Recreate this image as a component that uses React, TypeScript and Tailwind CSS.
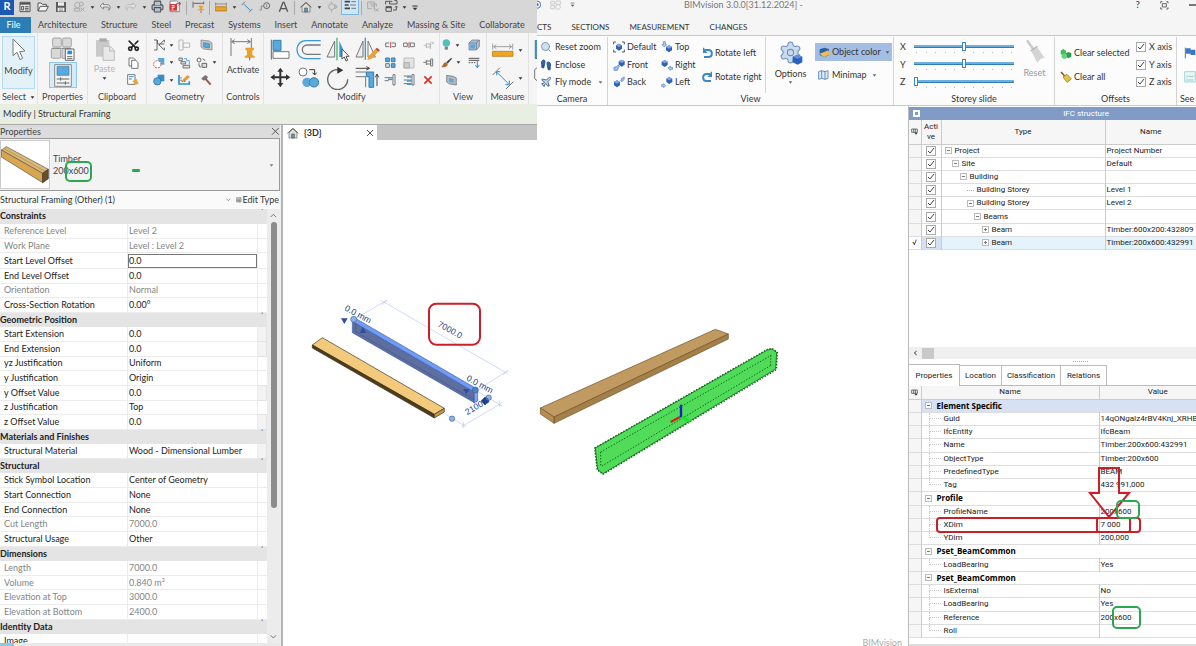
import type { ReactNode } from "react";
import clsx from "clsx";
import { Scissors, Search, Plane, Footprints, Printer, Settings } from "lucide-react";

interface ArtProps {
  w: number;
  h: number;
  children: ReactNode;
}

// Icons are drawn on a grid of 3 units per pixel
const Art = ({ w, h, children }: ArtProps) => (
  <svg
    className="shrink-0"
    width={w}
    height={h}
    viewBox={`0 0 ${w * 3} ${h * 3}`}
    fill="none"
    strokeWidth={3}
    aria-hidden="true"
  >
    {children}
  </svg>
);

const Caret = () => (
  <Art w={5} h={3}>
    <path d="M2 1h11l-5.500 7z" fill="#333" />
  </Art>
);

const BLUE = "#5aa9dd";
const GRAY = "#777";

/* ---------- Barra de acceso rápido ---------- */

type QuickKind = "icon" | "caret" | "sep" | "active";

const quickItems: { kind: QuickKind; label?: string; art?: ReactNode }[] = [
  {
    kind: "icon",
    label: "Ribbon panel",
    art: (
      <Art w={12} h={12}>
        <path d="M3 4h30v28H3z" stroke="#555" fill="#eee" />
        <path d="M3 8h30" stroke="#555" strokeWidth={6} />
        <path d="M8 16h6v11H8zM18 17h11M18 22h11M18 27h11" stroke="#555" />
      </Art>
    ),
  },
  {
    kind: "icon",
    label: "Open",
    art: (
      <Art w={12} h={12}>
        <path d="M3 30V6h9l4 4h12v7M3 30l7-14h24l-7 14z" stroke="#555" fill="#f4f4f4" />
      </Art>
    ),
  },
  {
    kind: "icon",
    label: "Save",
    art: (
      <Art w={12} h={12}>
        <path d="M3 3h30v30H3z" fill="#5c5c5c" />
        <path d="M9 4h18v10H9zM8 20h20v11H8z" fill="#eee" />
        <path d="M12 24h12M12 28h12" stroke="#777" strokeWidth={2} />
      </Art>
    ),
  },
  {
    kind: "icon",
    label: "Synchronize",
    art: (
      <Art w={13} h={12}>
        <circle cx="13" cy="12" r="8" stroke="#aaa" />
        <circle cx="25" cy="9" r="6" stroke="#aaa" />
        <path d="M4 30v-8h16v8zM22 20l12 10M34 20L22 32" stroke="#aaa" />
      </Art>
    ),
  },
  { kind: "caret" },
  {
    kind: "icon",
    label: "Undo",
    art: (
      <Art w={12} h={10}>
        <path d="M13 3L3 12l10 9v-6h12c5 0 7 4 4 10 7-6 6-17-5-17H13z" stroke="#555" fill="#eee" strokeWidth={2} />
      </Art>
    ),
  },
  { kind: "caret" },
  {
    kind: "icon",
    label: "Redo",
    art: (
      <Art w={12} h={10}>
        <path d="M23 3l10 9-10 9v-6H11c-5 0-7 4-4 10-7-6-6-17 5-17h11z" stroke="#aaa" fill="#e4e4e4" strokeWidth={2} />
      </Art>
    ),
  },
  { kind: "caret" },
  { kind: "icon", label: "Print", art: <Printer size={13} color="#4a5158" fill="#b8c4cc" /> },
  {
    kind: "icon",
    label: "Export PDF",
    art: (
      <Art w={12} h={13}>
        <path d="M3 3h20l8 8v24H3z" fill="#fff" stroke="#888" />
        <path d="M2 12h22v20H2z" fill="#d0383e" />
        <path d="M8 17h9M8 22h9M8 27h5" stroke="#fff" />
        <path d="M22 11h13M30 6l5 5-5 5" stroke="#d0383e" />
      </Art>
    ),
  },
  { kind: "sep" },
  {
    kind: "icon",
    label: "Dimension",
    art: (
      <Art w={13} h={12}>
        <path d="M3 2v18M35 2v8M5 7h28" stroke="#666" />
        <path d="M20 14h14v3l-3 2v6h5v3H18v-3h5v-6l-3-2z" fill="#e9a028" />
        <path d="M27 28v8" stroke="#b07416" />
      </Art>
    ),
  },
  { kind: "sep" },
  {
    kind: "icon",
    label: "Measure",
    art: (
      <Art w={12} h={10}>
        <path d="M2 2v9M34 2v9M2 6h32" stroke="#666" strokeWidth={2} />
        <path d="M1 14h34v13H1z" fill="#eaa22a" stroke="#a66f10" strokeWidth={2} />
      </Art>
    ),
  },
  { kind: "caret" },
  {
    kind: "icon",
    label: "Aligned dimension",
    art: (
      <Art w={12} h={12}>
        <path d="M2 12L12 2M24 34l10-10" stroke="#777" />
        <path d="M8 9l20 19" stroke="#2f8fd8" />
      </Art>
    ),
  },
  {
    kind: "icon",
    label: "Tag",
    art: (
      <Art w={12} h={10}>
        <circle cx="23" cy="11" r="9" stroke="#666" />
        <path d="M23 6v10M14 12H7v12H2" stroke="#666" strokeWidth={2} />
      </Art>
    ),
  },
  {
    kind: "icon",
    label: "Text",
    art: (
      <Art w={11} h={12}>
        <path d="M4 32L15 4h3l11 28M8 23h17" stroke="#555" strokeWidth={4} />
      </Art>
    ),
  },
  { kind: "sep" },
  { kind: "icon", label: "Default 3D view", art: <HomeArt /> },
  { kind: "caret" },
  {
    kind: "icon",
    label: "Section",
    art: (
      <Art w={11} h={12}>
        <circle cx="14" cy="17" r="9" stroke="#aaa" />
        <path d="M14 2v6M14 27v7M24 11l7 6-7 6z" stroke="#aaa" />
      </Art>
    ),
  },
  {
    kind: "active",
    label: "Thin lines",
    art: (
      <Art w={13} h={12}>
        <path d="M2 5h16M2 15h12M2 25h16" stroke="#444" strokeWidth={5} />
        <path d="M22 5h14M18 15h18M22 25h14" stroke="#444" strokeWidth={2} />
      </Art>
    ),
  },
  { kind: "sep" },
  {
    kind: "icon",
    label: "Close inactive",
    art: (
      <Art w={12} h={12}>
        <path d="M2 3h20v16M2 3v20h12M8 9h20v8M12 15h10v14M24 22l10 10M34 22L24 32" stroke="#aaa" />
      </Art>
    ),
  },
  {
    kind: "icon",
    label: "Switch windows",
    art: (
      <Art w={13} h={13}>
        <path d="M2 13V4h20M28 2h8v10H14v-6M3 20h16v14H3z" stroke="#555" />
        <path d="M3 22h16" stroke="#555" strokeWidth={5} />
        <path d="M24 30h10V19M30 22l4-4 4 4" stroke="#555" />
      </Art>
    ),
  },
  { kind: "caret" },
];

function HomeArt() {
  return (
    <Art w={12} h={12}>
      <path d="M6 17v16h24V17L18 6z" fill="#e5ddcf" stroke="#666" strokeWidth={2} />
      <path d="M1 19L18 4l16 15" stroke="#666" />
      <path d="M14 33V21h8v12z" fill="#4aa0d8" stroke="#555" strokeWidth={2} />
    </Art>
  );
}

const QuickAccess = () => (
  <div className="flex h-[15px] items-center overflow-hidden">
    <div className="flex h-[15px] w-4 shrink-0 items-center justify-start">
      <span className="flex h-[15px] w-[14px] items-start justify-center bg-[#1b57b5] text-[11px] leading-[11px] font-bold text-white">
        R
      </span>
    </div>
    {quickItems.map((item, i) => {
      if (item.kind === "caret")
        return (
          <span key={i} className="flex w-2 shrink-0 justify-center">
            <Caret />
          </span>
        );
      if (item.kind === "sep")
        return (
          <span key={i} className="flex w-[5px] shrink-0 justify-center">
            <span className="h-[14px] w-px bg-[#aaa]" />
          </span>
        );
      return (
        <button
          key={i}
          aria-label={item.label}
          className={clsx(
            "flex h-[15px] w-[18px] shrink-0 items-center justify-center pb-[2px]",
            item.kind === "active" && "border border-t-0 border-[#7cb8e0] bg-[#cfe6f5]",
          )}
        >
          {item.art}
        </button>
      );
    })}
    <span className="ml-1">
      <Art w={6} h={6}>
        <path d="M1 3h16" stroke="#333" />
        <path d="M2 8h14l-7 8z" fill="#333" />
      </Art>
    </span>
  </div>
);

/* ---------- Ribbon izquierdo ---------- */

const leftTabs = [
  "Architecture",
  "Structure",
  "Steel",
  "Precast",
  "Systems",
  "Insert",
  "Annotate",
  "Analyze",
  "Massing & Site",
  "Collaborate",
];

interface SectionProps {
  title: ReactNode;
  className: string;
  children: ReactNode;
}

const Section = ({ title, className, children }: SectionProps) => (
  <section
    className={clsx("flex shrink-0 flex-col border-r border-[#e2e2e2]", className)}
  >
    <div className="flex h-[57px] items-stretch justify-center">{children}</div>
    <div className="flex h-[14px] items-center justify-center gap-1 whitespace-nowrap text-[#444]">
      {title}
    </div>
  </section>
);

const Tool = ({ label, children }: { label: string; children: ReactNode }) => (
  <button aria-label={label} className="flex items-center justify-center gap-1">
    {children}
  </button>
);

const RevitRibbon = () => (
  <div className="flex h-[71px] overflow-hidden bg-[#f5f5f5]">
    <Section title={<>Select <Caret /></>} className="w-[38px]">
      <button className="mt-[3px] flex h-[53px] w-[33px] flex-col items-center gap-1 border border-[#b4dcf0] bg-[#e3f1f8] pt-px">
        <Art w={14} h={23}>
          <path d="M3 3v50l12-10 9 22 8-4-9-20 16-2z" fill="#fff" stroke="#777" />
        </Art>
        Modify
      </button>
    </Section>

    <Section title="Properties" className="w-[50px]">
      <div className="flex flex-col items-center pt-1">
        <Tool label="Type properties">
          <Art w={25} h={25}>
            <g fill="#d9d9d9" stroke="#888" strokeWidth="2">
              <rect x="8" y="3" width="26" height="27" rx="4" />
              <rect x="38" y="3" width="26" height="27" rx="4" />
              <rect x="4" y="34" width="28" height="30" rx="4" />
              <path d="M36 34h26v30H36z" />
            </g>
            <path d="M5 34h58" stroke="#777" strokeWidth="2" />
            <path d="M46 36h26v34H46z" fill="#fff" stroke="#666" />
            <path d="M52 41h14v11H52z" fill="#2b8fd6" />
            <path d="M51 59h16M51 65h16" stroke="#666" />
          </Art>
        </Tool>
        <button
          aria-label="Properties palette"
          className="flex h-[26px] w-7 items-center justify-center border border-[#8fc8ea] bg-[#d5ebf7]"
        >
          <Art w={18} h={23}>
            <path d="M2 2h50v65H2z" fill="#f4f4f4" stroke="#888" />
            <path d="M9 7h36v27H9z" fill={BLUE} stroke="#3a7fae" strokeWidth="2" />
            <path d="M8 45h38M8 57h38M20 40v10M34 52v10" stroke="#666" />
          </Art>
        </button>
      </div>
    </Section>

    <Section title="Clipboard" className="w-[59px]">
      <div className="flex gap-3">
        <button disabled className="flex w-5 flex-col items-center gap-[3px] pt-1 text-[#b5b5b5]">
          <Art w={20} h={24}>
            <path d="M3 9h40v50H3z" fill="#c9c9c9" />
            <path d="M13 4h22v10H13z" fill="#aaa" />
            <path d="M24 28h22l12 12v30H24z" fill="#e8e8e8" stroke="#bbb" />
            <path d="M44 29v13h13" stroke="#bbb" />
          </Art>
          <span className="leading-[10px]">Paste</span>
          <Caret />
        </button>
        <div className="grid grid-rows-[18px_17px_18px] pt-[3px]">
          <Tool label="Cut">
            <Scissors size={13} color="#222" strokeWidth={3} className="-rotate-90" />
          </Tool>
          <Tool label="Copy">
            <Art w={11} h={12}>
              <path d="M3 3h14l6 6v18H3z" fill="#fff" stroke={GRAY} />
              <path d="M11 10h12l7 7v17H11z" fill="#fff" stroke={GRAY} />
            </Art>
          </Tool>
          <Tool label="Match type">
            <Art w={12} h={12}>
              <path d="M2 2h22v29H2z" fill="#fff" stroke={GRAY} />
              <path d="M6 8h14M6 15h8" stroke={BLUE} strokeWidth={4} />
              <path d="M16 21l13-6 6 14-9 3z" fill="#e5a63a" />
            </Art>
          </Tool>
        </div>
      </div>
    </Section>

    <Section title="Geometry" className="w-[76px]">
      <div className="grid grid-cols-[26px_17px_26px] grid-rows-[18px_17px_18px] pt-[3px]">
        <Tool label="Cope">
          <Art w={12} h={12}>
            <path d="M3 3h9v30H3M13 3l1 12h20M34 3L18 18l16 15M34 3v7M34 33v-7" stroke="#666" />
          </Art>
          <Caret />
        </Tool>
        <Tool label="Cut geometry">
          <Art w={13} h={12}>
            <path d="M3 3h12v30H3zM15 12h20v13H15z" stroke="#bbb" />
          </Art>
        </Tool>
        <Tool label="Split face">
          <Art w={13} h={12}>
            <path d="M3 3l25 3 8 6v21l-25-3-8-6z" fill="#c5c8cb" stroke={GRAY} strokeWidth="2" />
            <path d="M11 11l17 3v13l-17-3z" fill={BLUE} stroke="#357fae" strokeWidth="2" />
          </Art>
        </Tool>
        <Tool label="Cut">
          <Art w={12} h={12}>
            <path d="M14 3h20v20H22z" fill={BLUE} />
            <circle cx="13" cy="22" r="11" fill="#fff" stroke="#c2524c" strokeDasharray="6 3" />
          </Art>
          <Caret />
        </Tool>
        <Tool label="Wall joins">
          <Art w={13} h={12}>
            <path d="M3 3h10v8H3zM9 14h14v7H9zM15 25h20v8H15z" fill="#ddd" stroke={GRAY} />
            <path d="M18 5h8v6h8v12" stroke={BLUE} />
          </Art>
        </Tool>
        <Tool label="Paint">
          <Art w={12} h={12}>
            <circle cx="9" cy="9" r="6" stroke="#666" />
            <path d="M18 19h14v12H18z" fill="#ddd" stroke="#666" />
            <path d="M20 5l8 6M9 19v8l6 4" stroke="#666" />
          </Art>
          <Caret />
        </Tool>
        <Tool label="Join">
          <Art w={12} h={12}>
            <path d="M14 2h20v20H14z" fill="#3b8cc9" />
            <circle cx="13" cy="22" r="11" fill={BLUE} stroke="#357fae" />
          </Art>
          <Caret />
        </Tool>
        <Tool label="Profile">
          <Art w={13} h={12}>
            <path d="M3 3v27h31v-8" stroke="#2b8fd6" strokeWidth={5} />
            <path d="M14 17l15-14 7 6-15 13-8 2z" fill="#e99a32" />
            <path d="M9 10v12h15" stroke="#666" strokeDasharray="4 3" />
          </Art>
        </Tool>
        <Tool label="Demolish">
          <Art w={12} h={12}>
            <path d="M3 14L16 3l9 7-13 10z" fill="#777" />
            <path d="M16 14l16 18" stroke="#a3573f" strokeWidth={6} />
          </Art>
        </Tool>
      </div>
    </Section>

    <Section title="Controls" className="w-[41px]">
      <button className="flex flex-col items-center gap-[3px] pt-1">
        <Art w={25} h={24}>
          <path d="M3 3v54M64 3v30M5 14h56M14 8L5 14l9 6M52 8l9 6-9 6" stroke={GRAY} />
          <path d="M46 32h26v6l-5 3v13l7 4v4H44v-4l7-4V41l-5-3z" fill="#eba129" />
          <path d="M59 60v10" stroke="#8a6a30" />
        </Art>
        Activate
      </button>
    </Section>

    <Section title="Modify" className="w-[176px]">
      <div className="flex">
        <div className="grid grid-cols-[29px_29px_29px_29px] grid-rows-[29px_27px] pt-[2px]">
          <Tool label="Align">
            <Art w={20} h={22}>
              <path d="M4 2v60" stroke="#666" />
              <path d="M9 4h24v30H9z" fill={BLUE} stroke="#357fae" />
              <path d="M9 38h48v20H9z" fill="#fff" stroke={GRAY} />
            </Art>
          </Tool>
          <Tool label="Offset">
            <Art w={26} h={22}>
              <path d="M74 5H30c-36 0-36 54 0 54h44" stroke="#3f97d4" strokeWidth={4} />
              <path d="M74 18H34c-20 0-20 28 0 28h40" stroke={GRAY} strokeWidth={4} />
            </Art>
          </Tool>
          <Tool label="Mirror pick axis">
            <Art w={24} h={25}>
              <path d="M26 12v48H3z" fill="#eee" stroke={GRAY} />
              <path d="M33 2v68" stroke="#42b86c" strokeWidth={4} />
              <path d="M40 12v48h22z" fill="#3f97d4" />
              <path d="M48 36v30l7-6 5 12 5-2-5-12h9z" fill="#fff" stroke="#555" />
            </Art>
          </Tool>
          <Tool label="Mirror draw axis">
            <Art w={25} h={25}>
              <path d="M24 12v48H3z" fill="#eee" stroke={GRAY} />
              <path d="M31 2v66" stroke="#3f97d4" strokeWidth={4} />
              <path d="M39 12v48h22z" fill="#fff" stroke={GRAY} />
              <path d="M40 58l21-22 9 8-20 21-13 4z" fill="#eda034" />
              <path d="M61 36l5-4 9 8-5 4z" fill="#c8473b" />
            </Art>
          </Tool>
          <Tool label="Move">
            <Art w={21} h={21}>
              <path
                d="M31 2l9 12h-6v14h14v-6l13 9-13 9v-6H34v14h6L31 61l-9-13h6V34H14v6L1 31l13-9v6h14V14h-6z"
                fill="#333"
              />
            </Art>
          </Tool>
          <Tool label="Copy element">
            <Art w={22} h={22}>
              <circle cx="15" cy="15" r="12" fill="#fff" stroke={GRAY} />
              <path d="M34 8h16v14M44 17l6 7 6-7" stroke="#333" />
              <circle cx="27" cy="46" r="14" fill={BLUE} />
              <circle cx="48" cy="46" r="14" fill={BLUE} stroke="#357fae" />
            </Art>
          </Tool>
          <Tool label="Rotate">
            <Art w={24} h={24}>
              <path d="M44 12A30 30 0 1 0 65 40" stroke="#666" strokeWidth={4} />
              <path d="M34 2l18 11-18 10z" fill="#333" />
            </Art>
          </Tool>
          <Tool label="Trim">
            <Art w={25} h={23}>
              <path d="M2 7h40M34 2l10 5-10 5" stroke="#444" />
              <path d="M2 18h32M2 32h30v32" stroke={GRAY} />
              <path d="M34 18h22v46H42V32h-8z" fill={BLUE} stroke="#357fae" />
              <path d="M66 60V26M61 34l5-10 5 10" stroke="#444" />
            </Art>
          </Tool>
        </div>
        <div className="grid grid-cols-[18px_19px_19px] grid-rows-[18px_17px_18px] pt-[3px]">
          <Tool label="Split">
            <Art w={11} h={6}>
              <path d="M13 3H2v11h11M20 3h11v11H20" stroke={GRAY} />
              <path d="M17 0v18" stroke="#d05048" />
            </Art>
          </Tool>
          <Tool label="Split with gap">
            <Art w={12} h={6}>
              <path d="M13 3H2v11h11zM22 3h12v11H22z" stroke={GRAY} />
              <path d="M18 0v18" stroke="#d05048" />
            </Art>
          </Tool>
          <Tool label="Unpin">
            <Art w={11} h={9}>
              <path d="M2 13h8M10 6v15M10 9h12v9H10M22 4v20M26 2l6 8M32 2l-6 8" stroke="#bbb" />
            </Art>
          </Tool>
          <Tool label="Array">
            <Art w={11} h={12}>
              <g fill={BLUE} stroke="#357fae">
                <path d="M2 3h11v11H2zM19 3h11v11H19zM19 20h11v11H19z" />
                <path d="M2 20h11v11H2z" fill="#ddd" stroke={GRAY} />
              </g>
            </Art>
          </Tool>
          <Tool label="Scale">
            <Art w={12} h={12}>
              <path d="M3 3h30v30H3z" fill="#e4e4e4" stroke="#bbb" />
              <path d="M3 17h16v16H3z" fill="#ccc" stroke="#aaa" />
            </Art>
          </Tool>
          <Tool label="Pin">
            <Art w={11} h={9}>
              <path d="M1 13h9M10 6v15M10 9h13v9H10M23 3v21h6V3z" stroke={GRAY} />
            </Art>
          </Tool>
          <Tool label="Trim single">
            <Art w={13} h={12}>
              <path d="M33 2v31h-6V2z" fill="#fff" stroke={GRAY} />
              <path d="M2 11h24M2 20h12" stroke={GRAY} />
              <path d="M12 16h14" stroke="#3f97d4" strokeWidth={5} />
            </Art>
          </Tool>
          <Tool label="Trim multiple">
            <Art w={12} h={12}>
              <path d="M33 2v31h-6V2z" fill="#fff" stroke={GRAY} />
              <path d="M2 6h24M2 18h24M2 29h24" stroke={GRAY} />
              <path d="M12 9h14M12 21h14M12 31h14" stroke="#3f97d4" strokeWidth={4} />
            </Art>
          </Tool>
          <Tool label="Delete">
            <Art w={10} h={10}>
              <path d="M4 4l22 22M26 4L4 26" stroke="#e02f2b" strokeWidth={5} />
            </Art>
          </Tool>
        </div>
      </div>
    </Section>

    <Section title="View" className="w-[47px]">
      <div className="grid grid-cols-[22px_24px] grid-rows-[18px_17px_18px] pt-[3px]">
        <Tool label="Hide">
          <Art w={9} h={12}>
            <circle cx="13" cy="12" r="11" fill="#52c0bd" />
            <path d="M8 23h10v9H8z" fill="#888" />
          </Art>
          <Caret />
        </Tool>
        <Tool label="Selection box">
          <Art w={12} h={12}>
            <path d="M3 12L12 3h22v20l-9 10H3z" fill="#a9c3d8" stroke="#667" strokeWidth={2} />
            <path d="M3 12h22v21M25 12l9-9" stroke="#667" strokeWidth={2} />
            <path d="M7 16h14v13H7z" fill={BLUE} />
          </Art>
        </Tool>
        <Tool label="Override">
          <Art w={11} h={11}>
            <path d="M31 2L16 15l4 5L33 5z" fill="#444" />
            <path d="M15 16c-9 0-7 9-14 14 12 2 20-2 19-9z" fill="#a96a2c" />
          </Art>
          <Caret />
        </Tool>
        <Tool label="Linework">
          <Art w={13} h={12}>
            <path d="M2 4h32M2 10h32" stroke="#555" />
            <path d="M2 17h20" stroke="#555" strokeDasharray="5 3" />
            <path d="M28 12v18M22 24l6 8 6-8" stroke="#2b8fd6" />
          </Art>
        </Tool>
        <Tool label="Displace">
          <Art w={11} h={12}>
            <path d="M2 4l20 3 9 5v21l-20-3-9-6z" fill="#b5bcc2" stroke="#666" strokeWidth={2} />
            <path d="M9 12l14 3v11l-14-3z" fill={BLUE} />
          </Art>
        </Tool>
      </div>
    </Section>

    <Section title="Measure" className="w-[42px]">
      <div className="grid grid-rows-[30px_27px] pt-[2px]">
        <Tool label="Measure between">
          <Art w={22} h={14}>
            <path d="M2 2v18M62 2v18M5 11h54M13 5l-8 6 8 6M51 5l8 6-8 6" stroke={GRAY} strokeWidth={2} />
            <path d="M1 25h62v15H1z" fill="#f0a623" stroke="#a67014" strokeWidth={2} />
          </Art>
          <Caret />
        </Tool>
        <Tool label="Aligned">
          <Art w={22} h={23}>
            <path d="M2 24L24 2M42 66l22-22" stroke={GRAY} />
            <path d="M13 14l38 38M14 25V14h11M40 53h12V41" stroke="#2f8fd8" />
          </Art>
          <Caret />
        </Tool>
      </div>
    </Section>

    <div className="flex flex-1 flex-col items-end gap-2 pt-[7px]">
      <Art w={3} h={19}>
        <path d="M9 0H4v56h5z" fill={BLUE} stroke="#357fae" />
      </Art>
      <Art w={3} h={15}>
        <path d="M9 2L2 8v27l7 6" stroke={GRAY} />
      </Art>
    </div>
  </div>
);

/* ---------- Paleta de propiedades ---------- */

interface Param {
  name: string;
  value: string;
  muted?: boolean;
  button?: boolean;
  input?: boolean;
}

const paramGroups: { title: string; params: Param[] }[] = [
  {
    title: "Constraints",
    params: [
      { name: "Reference Level", value: "Level 2", muted: true },
      { name: "Work Plane", value: "Level : Level 2", muted: true },
      { name: "Start Level Offset", value: "0.0", input: true },
      { name: "End Level Offset", value: "0.0" },
      { name: "Orientation", value: "Normal", muted: true },
      { name: "Cross-Section Rotation", value: "0.00°" },
    ],
  },
  {
    title: "Geometric Position",
    params: [
      { name: "Start Extension", value: "0.0", button: true },
      { name: "End Extension", value: "0.0", button: true },
      { name: "yz Justification", value: "Uniform" },
      { name: "y Justification", value: "Origin" },
      { name: "y Offset Value", value: "0.0", button: true },
      { name: "z Justification", value: "Top" },
      { name: "z Offset Value", value: "0.0", button: true },
    ],
  },
  {
    title: "Materials and Finishes",
    params: [
      { name: "Structural Material", value: "Wood - Dimensional Lumber", button: true },
    ],
  },
  {
    title: "Structural",
    params: [
      { name: "Stick Symbol Location", value: "Center of Geometry" },
      { name: "Start Connection", value: "None" },
      { name: "End Connection", value: "None" },
      { name: "Cut Length", value: "7000.0", muted: true },
      { name: "Structural Usage", value: "Other" },
    ],
  },
  {
    title: "Dimensions",
    params: [
      { name: "Length", value: "7000.0", muted: true },
      { name: "Volume", value: "0.840 m³", muted: true },
      { name: "Elevation at Top", value: "3000.0", muted: true },
      { name: "Elevation at Bottom", value: "2400.0", muted: true },
    ],
  },
  { title: "Identity Data", params: [{ name: "Image", value: "" }] },
];

const ParamTable = () => (
  <table className="h-[440px] w-full table-fixed border-collapse">
    <colgroup>
      <col />
      <col className="w-[130px]" />
      <col className="w-[9px]" />
    </colgroup>
    {paramGroups.map((group) => (
      <tbody key={group.title}>
        <tr className="h-[14px] bg-[#e4e4e4]">
          <th colSpan={2} className="p-0 text-left leading-[12px] font-bold text-[#222]">
            {group.title}
          </th>
          <td className="p-0 text-center align-top text-[7px] leading-[7px]">ˈ</td>
        </tr>
        {group.params.map((p) => (
          <tr
            key={p.name}
            className={clsx(
              "h-[14px] border-b border-[#ececec]",
              p.muted ? "text-[#858585]" : "text-[#222]",
            )}
          >
            <th className="border-r border-[#ececec] p-0 pl-1 text-left leading-[12px] font-normal">
              {p.name}
            </th>
            <td className="border-r border-[#ececec] p-0 leading-[12px]">
              {p.input ? (
                <input
                  aria-label={p.name}
                  defaultValue={p.value}
                  className="block h-[14px] w-full border border-[#777] outline-none"
                />
              ) : (
                <span className="pl-px">{p.value}</span>
              )}
            </td>
            <td className={clsx("p-0", p.button && "border border-[#e2e2e2] bg-[#f3f3f3]")} />
          </tr>
        ))}
      </tbody>
    ))}
  </table>
);

const PropertiesPalette = () => (
  <aside className="flex w-[283px] shrink-0 flex-col overflow-hidden border-r-2 border-[#b5b5b5] bg-[#f0f0f0] pr-px">
    <div className="flex h-[13px] shrink-0 items-center justify-between bg-[#dcdcdc] text-[#444]">
      Properties
      <button aria-label="Close properties">
        <Art w={9} h={9}>
          <path d="M3 3l20 20M23 3L3 23" stroke="#555" />
        </Art>
      </button>
    </div>
    <div className="relative flex h-[53px] shrink-0 items-center border border-l-0 border-[#999] bg-[#f3f3f3]">
      <div className="flex h-[49px] w-[50px] items-center justify-center border border-[#ccc] bg-white">
        <Art w={48} h={40}>
          <path d="M1 15L16 5l126 68-17 12z" fill="#dcb974" stroke="#555" strokeWidth={2} />
          <path d="M8 10l126 70" stroke="#a88545" strokeWidth={2} />
          <path d="M1 15l124 70v28L1 36z" fill="#d9a64f" stroke="#555" strokeWidth={2} />
          <path d="M125 85l17-12v28l-17 12z" fill="#6b4f22" stroke="#333" strokeWidth={2} />
        </Art>
      </div>
      <div className="pl-[3px] leading-[12px] text-[#444]">
        <p>Timber</p>
        <p>200x600</p>
      </div>
      <span className="absolute top-[22px] left-[65px] h-[21px] w-[27px] rounded-[5px] border-2 border-[#2aa84f]" />
      <span className="absolute top-[30px] left-[132px] h-[3px] w-2 rounded-[1px] bg-[#2aa84f]" />
      <span className="absolute top-[25px] right-[5px] opacity-60">
        <Caret />
      </span>
    </div>
    <div className="flex h-[18px] shrink-0 items-center bg-[#fafafa] text-[#333]">
      <span className="flex-1">Structural Framing (Other) (1)</span>
      <Art w={5} h={4}>
        <path d="M1 2l6 6 6-6" stroke="#666" strokeWidth={2} />
      </Art>
      <button className="ml-[5px] flex items-center gap-px pr-px">
        <Art w={6} h={6}>
          <path d="M2 2h13v13H2zM2 6h13M6 6v9M11 6v9M2 11h13" stroke="#777" strokeWidth={2} />
        </Art>
        Edit Type
      </button>
    </div>
    <div className="flex min-h-0 flex-1">
      <div className="min-w-0 flex-1 overflow-hidden bg-white">
        <ParamTable />
      </div>
      <div className="flex w-[13px] shrink-0 flex-col items-center bg-[#ececec] py-1">
        <Art w={7} h={5}>
          <path d="M2 12l8-8 8 8" stroke="#777" />
        </Art>
        <span className="mt-1 h-[286px] w-[6px] rounded-[3px] bg-[#8c8c8c]" />
        <span className="flex-1" />
        <Art w={7} h={5}>
          <path d="M2 4l8 8 8-8" stroke="#777" />
        </Art>
      </div>
    </div>
    <div className="h-[3px] shrink-0 bg-[#e9e9e9]">
      <div className="h-[3px] w-[14px] bg-[#8cc8e8]" />
    </div>
  </aside>
);

/* ---------- Vista 3D de Revit ---------- */

const RevitScene = () => (
  <svg
    className="mt-[150px] ml-[2px] w-[250px] font-['Liberation_Sans',sans-serif]"
    viewBox="0 0 750 450"
    role="img"
    aria-label="Timber beams"
  >
    <g stroke="#b8c7ee" strokeWidth="2">
      <path d="M213 85l94-55M286 30l382 221M578 300l90-58M290 44l16-14M654 254l16-14" />
      <path d="M478 370l66 41M530 410l122-72M580 306l72 42M535 396v18M643 332v18" />
    </g>
    <g strokeWidth="2" stroke="#3a2f18" strokeLinejoin="round">
      <path d="M82 165l30-22 366 212-30 18z" fill="#f3c97c" />
      <path d="M82 165l366 208v11L82 174z" fill="#4b3d1d" />
      <path d="M448 373l30-18v11l-30 18z" fill="#c4974c" />
    </g>
    <g strokeWidth="2" stroke="#3f5fb5" strokeLinejoin="round">
      <path d="M202 94l366 212v32L202 128z" fill="#5d6e9f" />
      <path d="M202 94l11-8 365 212-10 8z" fill="#6f9cf5" />
      <path d="M568 306l10-8v35l-10 5z" fill="#86a5e8" />
      <path d="M212 100v25l356 205" fill="none" stroke="#45568c" />
    </g>
    <g>
      <path d="M168 85h20l-10 17zM234 111l10 18h-20zM534 297h20l-10 16z" fill="#2f4f9c" />
      <path d="M600 320l13 13-13 13-13-13z" fill="#1d3f8f" />
    </g>
    <g fill="#8fb3e3" stroke="#41629c" strokeWidth="2">
      <circle cx="206" cy="88" r="9" />
      <circle cx="571" cy="300" r="9" fill="#4c7fcb" />
      <circle cx="611" cy="323" r="8" />
      <circle cx="501" cy="386" r="8" />
    </g>
    <g fill="#1f3f86" fontSize="26">
      <text transform="translate(177 60) rotate(28)">0.0 mm</text>
      <text transform="translate(456 108) rotate(29)">7000.0</text>
      <text transform="translate(542 270) rotate(28)">0.0 mm</text>
      <text transform="translate(547 376) rotate(-31)">2100.0</text>
    </g>
    <rect x="432" y="41" width="153" height="123" rx="22" fill="none" stroke="#cc1f2a" strokeWidth="6" />
  </svg>
);

const RevitView = () => (
  <div className="flex min-w-0 flex-1 flex-col overflow-hidden bg-white">
    <div className="flex h-[15px] shrink-0 bg-[#c4c4c4]">
      <div className="flex w-[94px] items-center bg-white pr-[3px] pl-1">
        <HomeArt />
        <span className="flex-1 pl-[5px] font-bold text-[#333]">{"{3D}"}</span>
        <button aria-label="Close view">
          <Art w={8} h={8}>
            <path d="M3 3l18 18M21 3L3 21" stroke="#555" />
          </Art>
        </button>
      </div>
    </div>
    <RevitScene />
  </div>
);

const RevitWindow = () => (
  <div className="flex w-[537px] shrink-0 flex-col overflow-hidden text-[9px] leading-[12px]">
    <header className="shrink-0 bg-[#d7d7d7] text-[#444]">
      <QuickAccess />
      <nav className="flex h-[18px] items-stretch overflow-hidden pt-[2px] whitespace-nowrap">
        <button className="w-[31px] shrink-0 bg-[#2a7db5] pr-1 text-white">File</button>
        {leftTabs.map((tab) => (
          <button key={tab} className="shrink-0 px-[7px]">
            {tab}
          </button>
        ))}
      </nav>
      <RevitRibbon />
      <div className="flex h-[21px] items-center border-b border-[#aaa] bg-[#e8eee2] pl-[3px] text-[#333]">
        Modify | Structural Framing
      </div>
    </header>
    <div className="flex min-h-0 flex-1">
      <PropertiesPalette />
      <RevitView />
    </div>
  </div>
);

/* ---------- Ribbon de BIMvision ---------- */

const Cube = ({ x, y }: { x: number; y: number }) => (
  <g transform={`translate(${x} ${y})`}>
    <path d="M0 5l9-5 9 5v10l-9 6-9-6z" fill="#2f62b3" />
    <path d="M0 5l9-5 9 5-9 5z" fill="#7fa9e6" />
  </g>
);

const cameraViews: { label: string; art: ReactNode }[] = [
  {
    label: "Default",
    art: (
      <>
        <path d="M2 10V3h7M27 3h7v7M34 26v7h-7M9 33H2v-7" stroke="#555" />
        <Cube x={9} y={8} />
      </>
    ),
  },
  {
    label: "Top",
    art: (
      <>
        <path d="M7 2h6v9h4l-7 7-7-7h4z" fill="#b5cdf0" stroke="#5580c0" strokeWidth={2} />
        <Cube x={15} y={13} />
      </>
    ),
  },
  {
    label: "Front",
    art: (
      <>
        <path d="M3 24h7l5-6 4 4-5 8v4H3z" fill="#9fbfee" stroke="#5580c0" strokeWidth={2} />
        <Cube x={17} y={2} />
      </>
    ),
  },
  {
    label: "Right",
    art: (
      <>
        <Cube x={2} y={3} />
        <path d="M21 27l7-6v4h7v6h-7v3z" fill="#b5cdf0" stroke="#5580c0" strokeWidth={2} />
      </>
    ),
  },
  {
    label: "Back",
    art: (
      <>
        <Cube x={3} y={13} />
        <path d="M23 15l3-8 8-4-1 8-6 6z" fill="#9fbfee" stroke="#5580c0" strokeWidth={2} />
      </>
    ),
  },
  {
    label: "Left",
    art: (
      <>
        <Cube x={16} y={3} />
        <path d="M14 29l-6 6v-4H2v-5h6v-3z" fill="#b5cdf0" stroke="#5580c0" strokeWidth={2} />
      </>
    ),
  },
];

const BimSection = ({ title, className, children }: SectionProps) => (
  <section className={clsx("flex flex-col border-r border-[#d4d4d4]", className)}>
    <div className="flex h-[57px] min-w-0">{children}</div>
    <div className="h-[12px] text-center whitespace-nowrap">{title}</div>
  </section>
);

const CheckBox = ({ label, checked = true }: { label: string; checked?: boolean }) => (
  <span className="grid place-items-center">
    <input
      type="checkbox"
      aria-label={label}
      defaultChecked={checked}
      className="peer col-start-1 row-start-1 size-[10px] appearance-none border border-[#aaa] bg-white"
    />
    <svg
      className="pointer-events-none invisible col-start-1 row-start-1 size-[8px] peer-checked:visible"
      viewBox="0 0 8 8"
      fill="none"
    >
      <path d="M1 4l2 2 4-5" stroke="#444" />
    </svg>
  </span>
);

const axes = [
  { name: "X", value: 50 },
  { name: "Y", value: 50 },
  { name: "Z", value: 0 },
];

const Turn = ({ flip }: { flip?: boolean }) => (
  <Art w={11} h={12}>
    <g transform={flip ? "translate(33 0) scale(-1 1)" : undefined}>
      <path d="M7 9h12c14 0 14 21 0 21H6" stroke="#3c86c6" strokeWidth={6} />
      <path d="M3 2h4v16H3zM3 18V4l14 14z" fill="#3c86c6" />
    </g>
  </Art>
);

const BimRibbon = () => (
  <div className="flex h-[71px] overflow-hidden border-t border-b border-[#c9c9c9] bg-[#fcfcfc] pt-px text-[#333]">
    <BimSection title="Camera" className="w-[71px] shrink-0">
      <div className="grid grid-rows-[18px_17px_18px] pt-px pl-[3px]">
        <button className="flex items-center gap-[3px]">
          <Search size={12} color="#7f97b5" fill="#cfe0f3" />
          Reset zoom
        </button>
        <button className="flex items-center gap-[3px]">
          <Footprints size={12} color="#274f8c" fill="#3467ad" />
          Enclose
        </button>
        <button className="flex items-center gap-[3px]">
          <Plane size={12} color="#4d7099" fill="#c5d8ea" />
          Fly mode
          <span className="pl-1 opacity-70">
            <Caret />
          </span>
        </button>
      </div>
    </BimSection>

    <BimSection title="View" className="w-[286px] shrink-0">
      <div className="grid grid-cols-[48px_41px] grid-rows-[18px_17px_18px] pt-px pl-[5px]">
        {cameraViews.map((v) => (
          <button key={v.label} className="flex items-center gap-[2px]">
            <Art w={12} h={12}>
              {v.art}
            </Art>
            {v.label}
          </button>
        ))}
      </div>
      <div className="grid w-[64px] grid-rows-2 border-r border-[#d4d4d4] py-1">
        <button className="flex items-center gap-[2px] whitespace-nowrap">
          <Turn />
          Rotate left
        </button>
        <button className="flex items-center gap-[2px] whitespace-nowrap">
          <Turn flip />
          Rotate right
        </button>
      </div>
      <button className="flex w-[49px] flex-col items-center pt-[3px]">
        <span className="relative">
          <Settings size={25} color="#6d8fb8" fill="#c9daec" strokeWidth={1} />
          <span className="absolute right-0 bottom-0">
            <Art w={11} h={11}>
              <path d="M2 8l15-6 14 6v17l-14 7-15-7z" fill="#2c62bd" />
              <path d="M2 8l15-6 14 6-14 6z" fill="#5f93e0" />
            </Art>
          </span>
        </span>
        <span className="pt-[3px]">Options</span>
        <span className="pt-px opacity-70">
          <Caret />
        </span>
      </button>
      <div className="flex flex-col gap-[5px] pt-[6px]">
        <button className="flex h-[18px] w-[77px] items-center gap-[2px] bg-[#a4bde2] pl-1 whitespace-nowrap">
          <Art w={11} h={11}>
            <path d="M2 7l14-5 14 4v18l-14 7-14-7z" fill="#2a5fa9" />
            <path d="M2 20l26-10 4 12-17 9z" fill="#f0c04c" />
          </Art>
          <span className="flex-1 text-left">Object color</span>
          <span className="pr-[2px] opacity-70">
            <Caret />
          </span>
        </button>
        <button className="flex h-[18px] items-center gap-[3px] pl-[3px]">
          <Art w={11} h={10}>
            <path d="M2 5l9-3 10 3 9-3v23l-9 3-10-3-9 3z" fill="#e3edf8" stroke="#5f8fc4" />
            <path d="M11 2v23M21 5v23" stroke="#5f8fc4" />
          </Art>
          Minimap
          <span className="pl-[2px] opacity-70">
            <Caret />
          </span>
        </button>
      </div>
    </BimSection>

    <BimSection title="Storey slide" className="w-[161px] shrink-0">
      <div className="grid w-[121px] shrink-0 grid-rows-[18px_17px_18px] pt-px pl-[6px]">
        {axes.map((axis) => (
          <label key={axis.name} className="flex items-center">
            <span className="w-[14px]">{axis.name}</span>
            <span className="flex w-[100px] flex-col">
              <input
                type="range"
                defaultValue={axis.value}
                className="h-[9px] w-full appearance-none bg-transparent [&::-webkit-slider-runnable-track]:h-[3px] [&::-webkit-slider-runnable-track]:border-b [&::-webkit-slider-runnable-track]:border-[#2d7db8] [&::-webkit-slider-runnable-track]:bg-[#6db0dd] [&::-webkit-slider-thumb]:mt-[-3px] [&::-webkit-slider-thumb]:h-[9px] [&::-webkit-slider-thumb]:w-[4px] [&::-webkit-slider-thumb]:appearance-none [&::-webkit-slider-thumb]:border [&::-webkit-slider-thumb]:border-[#3a86c0] [&::-webkit-slider-thumb]:bg-white"
              />
              <span className="mt-px flex justify-between px-[2px]">
                {Array.from({ length: 11 }, (_, i) => (
                  <span key={i} className="size-px bg-[#bbb]" />
                ))}
              </span>
            </span>
          </label>
        ))}
      </div>
      <button disabled className="flex flex-1 flex-col items-center gap-[3px] pt-[3px] text-[#999]">
        <Art w={20} h={24}>
          <path d="M8 4l17 24" stroke="#ccc" strokeWidth={8} strokeLinecap="round" />
          <path d="M19 34l18-12 22 32c-10 0-16 5-22 14z" fill="#d4d4d4" />
          <path d="M17 33l20-14" stroke="#b5b5b5" strokeWidth={4} />
        </Art>
        Reset
      </button>
    </BimSection>

    <BimSection title="Offsets" className="w-[122px] shrink-0">
      <div className="grid flex-1 grid-rows-2 py-1 pl-[5px]">
        <button className="flex items-center gap-[2px] whitespace-nowrap">
          <Art w={12} h={11}>
            <path d="M2 8l8-5 8 5v10l-8 5-8-5z" fill="#3fbf5a" />
            <path d="M17 16l9-4 8 4v10l-9 5-8-5z" fill="#2aa046" />
            <path d="M5 20l8-4 8 4v9l-8 4-8-4z" fill="#5fd578" />
          </Art>
          Clear selected
        </button>
        <button className="flex items-center gap-[2px]">
          <Art w={12} h={12}>
            <path d="M3 3l11 12" stroke="#8a5a1c" strokeWidth={5} />
            <path d="M9 18l12-8 13 14-13 10z" fill="#e8c240" stroke="#8a6a1c" strokeWidth={2} />
          </Art>
          Clear all
        </button>
      </div>
      <div className="grid w-10 grid-rows-[18px_17px_18px] pt-px">
        {axes.map((axis) => (
          <span key={axis.name} className="flex items-center gap-[3px] whitespace-nowrap">
            <CheckBox label={`${axis.name} axis`} />
            {axis.name} axis
          </span>
        ))}
      </div>
    </BimSection>

    <div className="flex min-w-0 flex-1 flex-col overflow-hidden">
      <div className="flex h-[57px] flex-col gap-3 pt-[10px] pl-[7px]">
        <Art w={12} h={12}>
          <path d="M4 2v32" stroke="#8a6a3c" />
          <path d="M6 4h14v16H6zM20 8h14v16H20z" fill="#3d78c4" />
        </Art>
        <Art w={12} h={12}>
          <path d="M2 2h32v31H2z" fill="#e8f6f6" stroke="#a5d5d8" />
          <path d="M6 20c8-12 16 4 26-8M6 27h22" stroke="#6fc0c4" strokeWidth={2} />
        </Art>
      </div>
      <div className="h-[12px] pl-[3px]">See</div>
    </div>
  </div>
);

/* ---------- Paneles de BIMvision ---------- */

const Toggle = ({ open }: { open: boolean }) => (
  <button
    aria-label={open ? "Collapse" : "Expand"}
    className="grid size-[7px] shrink-0 place-items-center border border-[#bbb] bg-white"
  >
    <svg viewBox="0 0 5 5" className="size-[5px]" stroke="#777">
      <path d={open ? "M1 2.500h3" : "M1 2.500h3M2.500 1v3"} />
    </svg>
  </button>
);

const Customize = () => (
  <Art w={7} h={7}>
    <path d="M2 3h17v10H2zM8 3v10M13 3v10" stroke="#333" strokeWidth={2} />
    <path d="M10 14h10l-5 6z" fill="#333" />
  </Art>
);

const indents = [
  "pl-[3px]",
  "pl-[10px]",
  "pl-[18px]",
  "pl-[25px]",
  "pl-[32px]",
  "pl-[40px]",
];

const structure: {
  type: string;
  name: string;
  level: number;
  open?: boolean;
  leaf?: boolean;
  selected?: boolean;
}[] = [
  { type: "Project", name: "Project Number", level: 0, open: true },
  { type: "Site", name: "Default", level: 1, open: true },
  { type: "Building", name: "", level: 2, open: true },
  { type: "Building Storey", name: "Level 1", level: 3, leaf: true },
  { type: "Building Storey", name: "Level 2", level: 3, open: true },
  { type: "Beams", name: "", level: 4, open: true },
  { type: "Beam", name: "Timber:600x200:432809", level: 5 },
  { type: "Beam", name: "Timber:200x600:432991", level: 5, selected: true },
];

const StructureTable = () => (
  <table className="h-[130px] w-full table-fixed border-collapse whitespace-nowrap">
    <colgroup>
      <col className="w-3" />
      <col className="w-5" />
      <col className="w-[164px]" />
      <col />
    </colgroup>
    <thead>
      <tr className="h-6 border-b border-[#ccc] bg-[#f6f6f6]">
        <th className="border-r border-[#ccc] p-0 pl-[2px]">
          <Customize />
        </th>
        <th className="border-r border-[#ccc] p-0 font-normal">
          Acti
          <br />
          ve
        </th>
        <th className="border-r border-[#ccc] p-0 font-normal">Type</th>
        <th className="p-0 font-normal">Name</th>
      </tr>
    </thead>
    <tbody>
      {structure.map((row, i) => (
        <tr
          key={i}
          className={clsx("border-b border-[#ddd]", row.selected && "bg-[#e5f3fd]")}
        >
          <td
            className={clsx(
              "border-r border-[#ccc] p-0 text-center",
              row.selected ? "bg-white" : "bg-[#f6f6f6]",
            )}
          >
            {row.selected && "√"}
          </td>
          <td className={clsx("border-r border-[#ccc] p-0", row.selected && "bg-[#d5e0f2]")}>
            <CheckBox label={`${row.type} active`} />
          </td>
          <td className="border-r border-[#ccc] p-0">
            <div className={clsx("flex items-center", indents[row.level])}>
              {row.leaf ? (
                <span className="w-[7px] border-t border-dotted border-[#aaa]" />
              ) : (
                <Toggle open={!!row.open} />
              )}
              <span className="pl-[3px]">{row.type}</span>
            </div>
          </td>
          <td className="p-0 pl-px">{row.name}</td>
        </tr>
      ))}
    </tbody>
  </table>
);

const elementProps: { title: string; rows: [string, string][] }[] = [
  {
    title: "Element Specific",
    rows: [
      ["Guid", "14qONgaIz4rBV4Knj_XRHB"],
      ["IfcEntity", "IfcBeam"],
      ["Name", "Timber:200x600:432991"],
      ["ObjectType", "Timber:200x600"],
      ["PredefinedType", "BEAM"],
      ["Tag", "432 991,000"],
    ],
  },
  {
    title: "Profile",
    rows: [
      ["ProfileName", "200x600"],
      ["XDim", "7 000"],
      ["YDim", "200,000"],
    ],
  },
  { title: "Pset_BeamCommon", rows: [["LoadBearing", "Yes"]] },
  {
    title: "Pset_BeamCommon",
    rows: [
      ["IsExternal", "No"],
      ["LoadBearing", "Yes"],
      ["Reference", "200x600"],
      ["Roll", ""],
    ],
  },
];

const ElementTable = () => (
  <table className="h-[252px] w-full table-fixed border-collapse whitespace-nowrap">
    <colgroup>
      <col className="w-3" />
      <col className="w-[178px]" />
      <col />
    </colgroup>
    <thead>
      <tr className="h-[13px] border-b border-[#ccc] bg-[#f6f6f6]">
        <th className="border-r border-[#ccc] p-0 pl-[2px]">
          <Customize />
        </th>
        <th className="border-r border-[#ccc] p-0 font-normal">Name</th>
        <th className="p-0 pl-5 font-normal">Value</th>
      </tr>
    </thead>
    {elementProps.map((group, g) => (
      <tbody key={g}>
        <tr className="border-b border-[#ddd]">
          <td className="border-r border-[#ccc] bg-[#f6f6f6] p-0" />
          <th
            colSpan={2}
            className={clsx("p-0 font-['Open_Sans',sans-serif] font-bold text-black", g === 0 && "bg-[#d6e1f3]")}
          >
            <div className="flex h-3 items-center gap-[5px] pl-[3px]">
              <Toggle open />
              {group.title}
            </div>
          </th>
        </tr>
        {group.rows.map(([name, value], i) => (
          <tr key={name} className="border-b border-[#ddd]">
            <td className="border-r border-[#ccc] bg-[#f6f6f6] p-0" />
            <th className="border-r border-[#ccc] p-0 text-left font-normal">
              <div className="flex h-3 items-center gap-[3px] pl-[7px]">
                <span className="flex w-3 flex-col">
                  <span className="h-[6px] border-b border-l border-dotted border-[#ccc]" />
                  <span
                    className={clsx(
                      "h-[6px] border-dotted border-[#ccc]",
                      i < group.rows.length - 1 && "border-l",
                    )}
                  />
                </span>
                {name}
              </div>
            </th>
            <td className="p-0 pl-px">{value}</td>
          </tr>
        ))}
      </tbody>
    ))}
  </table>
);

// Marcas hechas a mano sobre la tabla de propiedades
const Markup = () => (
  <svg
    className="pointer-events-none absolute top-0 left-0 h-[252px] w-[240px]"
    viewBox="0 0 240 252"
    fill="none"
    strokeWidth="2"
  >
    <g stroke="#cb1f28">
      <rect x="28" y="132" width="203" height="14" rx="3" />
      <rect x="188" y="132" width="33" height="14" rx="2" />
      <path d="M190 82h20v25h10l-20 24-19-24h9z" />
    </g>
    <g stroke="#2aa84f">
      <rect x="208" y="115" width="22" height="17" rx="4" />
      <rect x="204" y="221" width="27" height="21" rx="4" />
    </g>
  </svg>
);

const Dock = () => (
  <aside className="flex w-[288px] shrink-0 flex-col overflow-hidden border-l border-[#bbb] bg-white font-[Roboto,sans-serif] text-[8px] leading-[10px] text-[#222]">
    <div className="mt-px flex h-[13px] shrink-0 items-center bg-[#7f9bc6] pl-1 text-white">
      <span className="grid size-[7px] place-items-center bg-white">
        <span className="size-[3px] bg-[#7f9bc6]" />
      </span>
      <h2 className="flex-1 pl-14 text-center">IFC structure</h2>
    </div>
    <div className="min-h-0 flex-1">
      <StructureTable />
    </div>
    <div className="flex h-[12px] shrink-0 items-center gap-1 bg-[#f0f0f0] pl-1">
      <Art w={5} h={6}>
        <path d="M11 3L4 9l7 6" stroke="#333" />
      </Art>
      <span className="h-[11px] w-3 bg-[#c9c9c9]" />
    </div>
    <div className="flex h-[5px] shrink-0 items-center justify-center pl-14">
      <span className="w-[15px] border-t border-dotted border-[#aaa]" />
    </div>
    <div role="tablist" className="flex h-[22px] shrink-0 items-end border-b border-[#bbb]">
      <button role="tab" aria-selected="true" className="mb-[-1px] h-[22px] w-[51px] border border-b-0 border-l-0 border-[#bbb] bg-white">
        Properties
      </button>
      <button role="tab" className="h-5 w-[42px] border-t border-r border-[#bbb]">
        Location
      </button>
      <button role="tab" className="h-5 w-[59px] border-t border-r border-[#bbb]">
        Classification
      </button>
      <button role="tab" className="h-5 w-[46px] border-t border-r border-[#bbb]">
        Relations
      </button>
    </div>
    <div className="relative h-[260px] shrink-0 border-b-2 border-[#ddd]">
      <ElementTable />
      <Markup />
    </div>
  </aside>
);

const BimScene = () => (
  <svg className="mt-[214px] w-[260px]" viewBox="21 0 780 480" role="img" aria-label="IFC beams">
    <g stroke="#6b5128" strokeWidth="2" strokeLinejoin="round">
      <path d="M31 264L556 28l39 14L72 291z" fill="#c09a60" />
      <path d="M72 291L595 42v15L72 310z" fill="#a57f48" />
      <path d="M31 264l41 27v19l-41-28z" fill="#b58d52" />
    </g>
    <path
      d="M196 384L712 90l14-3 14 10-3 50-518 314-16-12z"
      fill="#50dc58"
      stroke="#1c8427"
      strokeWidth="3"
    />
    <g fill="none" stroke="#11601a" strokeWidth="4" strokeDasharray="4 5">
      <path d="M194 384L712 88l14-3 16 12-3 52-520 314-18-14z" />
      <path d="M212 396L724 106M216 438L726 134M212 396v44M722 106v30" strokeWidth="3" />
    </g>
    <g fill="none" strokeWidth="7">
      <path d="M453 254v38" stroke="#1322c8" />
      <path d="M450 291l-28 15" stroke="#d62318" />
      <path d="M455 291l26 14" stroke="#16e62a" strokeWidth="9" />
    </g>
  </svg>
);

const BimWindow = () => (
  <div className="flex min-w-0 flex-1 flex-col overflow-hidden bg-white text-[9px] leading-[12px]">
    <header className="shrink-0">
      <div className="flex h-[35px] flex-col justify-between bg-[#f5f5f5]">
        <div className="flex h-[10px] items-center">
          <div className="flex w-[147px] items-center gap-[9px]">
            <Art w={4} h={10}>
              <path d="M0 3a11 11 0 0 1 0 22" stroke="#4a77b5" />
              <circle cx="1" cy="14" r="4" fill="#4a77b5" />
            </Art>
            <Art w={11} h={10}>
              <path d="M2 4h12v8H2zM2 17h12v9H2zM18 3h13v10H18z" stroke="#ccc" />
              <circle cx="24" cy="21" r="7" stroke="#ccc" />
            </Art>
            <Art w={5} h={6}>
              <path d="M2 3h11" stroke="#555" strokeWidth={2} />
              <path d="M2 8h11l-5 6z" fill="#555" />
            </Art>
          </div>
          <h1 className="text-[#777]">BIMvision 3.0.0[31.12.2024] -</h1>
          <div className="flex flex-1 items-center justify-end gap-5 text-[#555]">
            <button className="font-bold">?</button>
            <button aria-label="Full screen">
              <Art w={9} h={9}>
                <path d="M2 7V2h5M19 2h5v5M24 19v5h-5M7 24H2v-5M7 8h12v10H7z" stroke="#666" />
              </Art>
            </button>
            <button aria-label="Minimize" className="h-[2px] w-[7px] bg-[#777]" />
          </div>
        </div>
        <nav className="flex h-4 items-center gap-5 text-[8px] text-[#333]">
          <button>CTS</button>
          <button>SECTIONS</button>
          <button>MEASUREMENT</button>
          <button>CHANGES</button>
        </nav>
      </div>
      <BimRibbon />
    </header>
    <div className="flex min-h-0 flex-1">
      <main className="relative min-w-0 flex-1 overflow-hidden">
        <BimScene />
        <p className="absolute right-[6px] bottom-[-2px] text-[9px] leading-[10px] text-[#aaa]">BIMvision</p>
      </main>
      <Dock />
    </div>
  </div>
);

export default function App() {
  return (
    <div className="flex h-screen overflow-hidden bg-white font-[Lato,sans-serif]">
      <RevitWindow />
      <BimWindow />
    </div>
  );
}
